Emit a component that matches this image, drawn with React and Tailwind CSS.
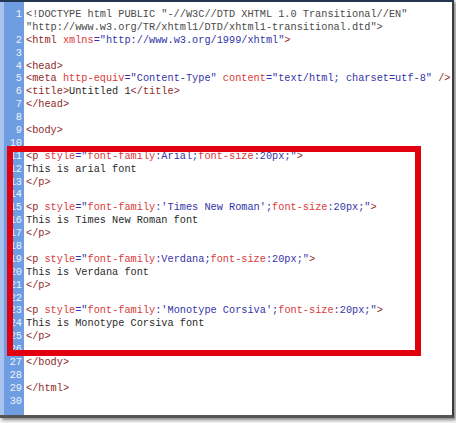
import React from "react";

// colours of the editor's syntax highlighting
const TAG = "text-[#8e2a2a]";
const ATTR = "text-[#d83a3a]";
const VAL = "text-[#3434a8]";
const DOC = "text-[#4a4a4a]";
const TXT = "text-[#2a2a2a]";

const t = (s) => [TAG, s];
const a = (s) => [ATTR, s];
const v = (s) => [VAL, s];
const x = (s) => [TXT, s];

const styleLine = (family) => [
  t("<p"),
  a(" style"),
  v("=\""),
  a("font-family"),
  v(":" + family + ";"),
  a("font-size"),
  v(":20px;\""),
  t(">"),
];

const rows = [
  { n: "1", parts: [[DOC, "<!DOCTYPE html PUBLIC \"-//W3C//DTD XHTML 1.0 Transitional//EN\""]] },
  { n: "", parts: [[DOC, "\"http://www.w3.org/TR/xhtml1/DTD/xhtml1-transitional.dtd\">"]] },
  { n: "2", parts: [t("<html"), a(" xmlns"), v("=\"http://www.w3.org/1999/xhtml\""), t(">")] },
  { n: "3", parts: [] },
  { n: "4", parts: [t("<head>")] },
  {
    n: "5",
    parts: [
      t("<meta"),
      a(" http-equiv"),
      v("=\"Content-Type\""),
      a(" content"),
      v("=\"text/html; charset=utf-8\""),
      t(" />"),
    ],
  },
  { n: "6", parts: [t("<title>"), x("Untitled 1"), t("</title>")] },
  { n: "7", parts: [t("</head>")] },
  { n: "8", parts: [] },
  { n: "9", parts: [t("<body>")] },
  { n: "10", parts: [] },
  { n: "11", parts: styleLine("Arial") },
  { n: "12", parts: [x("This is arial font")] },
  { n: "13", parts: [t("</p>")] },
  { n: "14", parts: [] },
  { n: "15", parts: styleLine("'Times New Roman'") },
  { n: "16", parts: [x("This is Times New Roman font")] },
  { n: "17", parts: [t("</p>")] },
  { n: "18", parts: [] },
  { n: "19", parts: styleLine("Verdana") },
  { n: "20", parts: [x("This is Verdana font")] },
  { n: "21", parts: [t("</p>")] },
  { n: "22", parts: [] },
  { n: "23", parts: styleLine("'Monotype Corsiva'") },
  { n: "24", parts: [x("This is Monotype Corsiva font")] },
  { n: "25", parts: [t("</p>")] },
  { n: "26", parts: [] },
  { n: "27", parts: [t("</body>")] },
  { n: "28", parts: [] },
  { n: "29", parts: [t("</html>")] },
  { n: "30", parts: [] },
];

export default function App() {
  return (
    <div className="w-[456px] h-[423px] bg-[#f4f4f4] overflow-hidden">
      <div className="relative w-[454px] h-[418px] bg-white border-t-2 border-[#22364f] border-r-2 border-r-[#3c3c3c] border-b-[3px] border-b-[#555] shadow-[2px_2px_3px_rgba(0,0,0,0.45)]">
        <div className="flex h-full font-['Liberation_Mono','Courier_New',monospace] text-[10.25px] leading-[12.9px]">
          {/* line numbers */}
          <div className="w-[24px] shrink-0 bg-[#6f9de2] border-l-[4px] border-[#a9c3ee] pt-[6px] pr-[2px] text-right text-[#eef3fb]">
            {rows.map((r, i) => (
              <div key={i} className="h-[12.9px] whitespace-pre">
                {r.n}
              </div>
            ))}
          </div>

          {/* code */}
          <div className="flex-1 pt-[6px] pl-[2px]">
            {rows.map((r, i) => (
              <div key={i} className="h-[12.9px] whitespace-pre">
                {r.parts.map(([c, s], j) => (
                  <span key={j} className={c}>
                    {s}
                  </span>
                ))}
              </div>
            ))}
          </div>
        </div>

        {/* highlight box */}
        <div className="absolute left-[7px] top-[144px] w-[414px] h-[210px] border-[6px] border-[#e2000e]" />
      </div>
    </div>
  );
}
